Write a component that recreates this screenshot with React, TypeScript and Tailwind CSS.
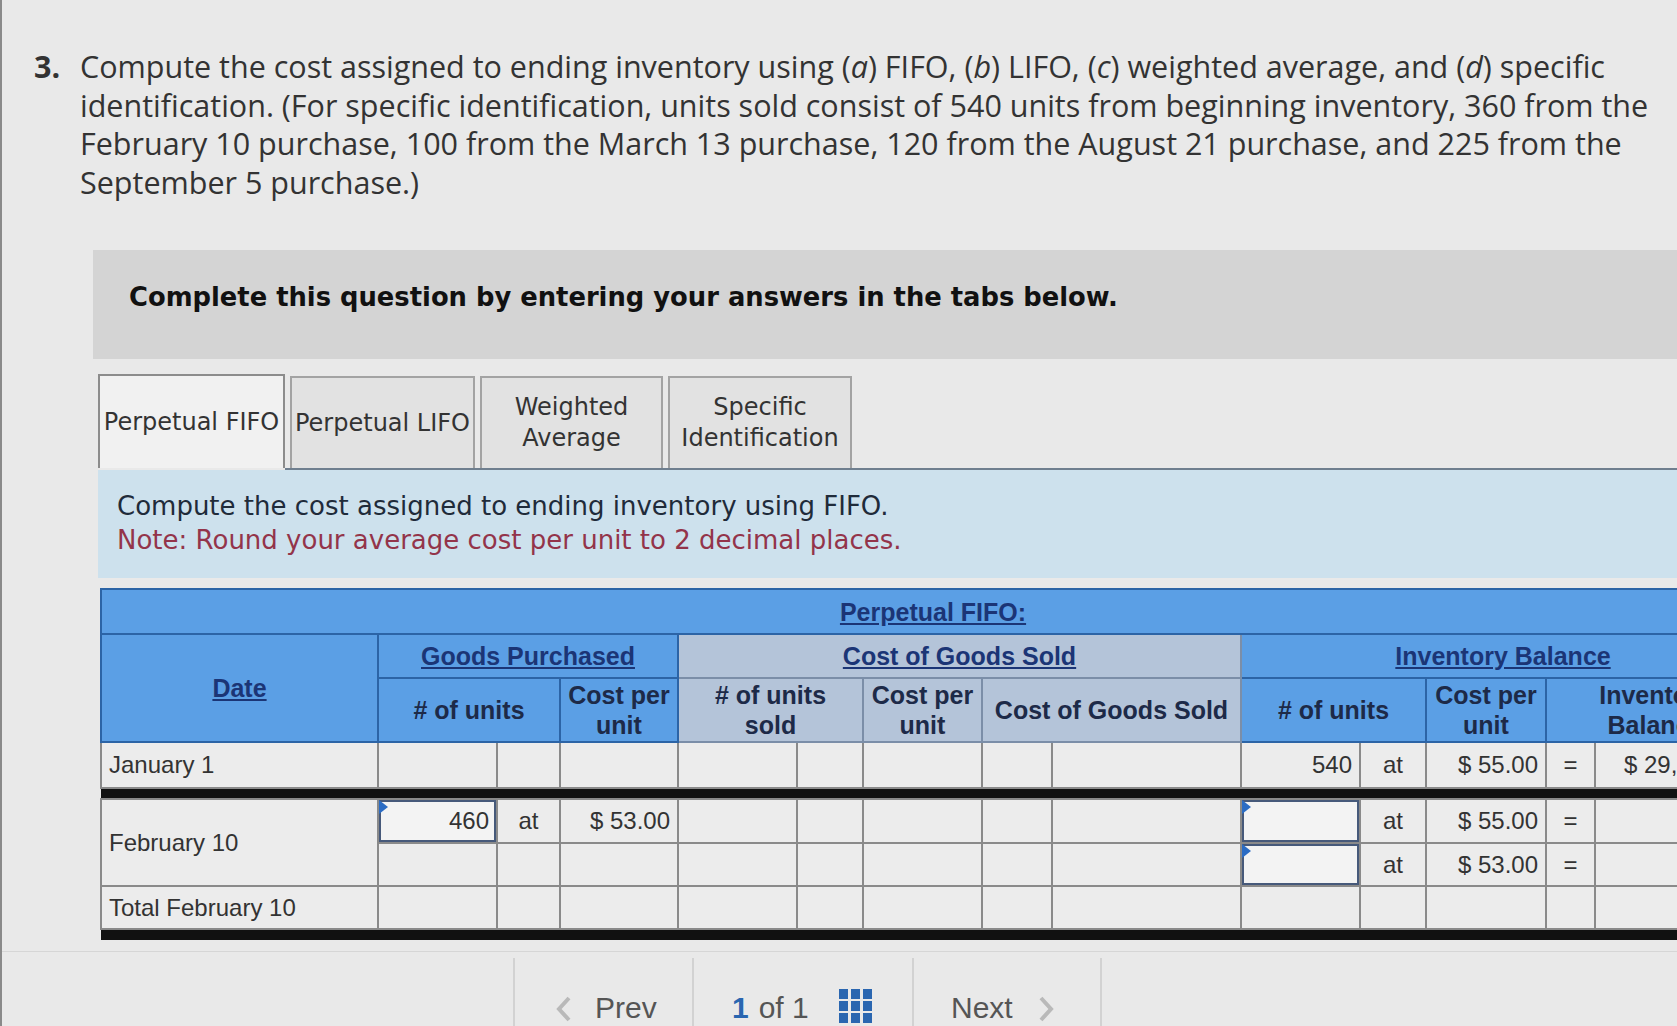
import React from 'react';

const colWidths = [277, 119, 63, 118, 119, 66, 119, 70, 189, 119, 66, 120, 49, 170];

const blueHead = 'bg-[#5b9fe5] border-2 border-[#2c64a6] text-center align-middle';
const greyHead = 'bg-[#b4c4d9] border-2 border-[#7b8ea8] text-center align-middle';
const cell = 'border-2 border-[#8a8a8a] bg-[#ececec] text-[#333] align-middle px-[7px]';
const inputCell = 'border-2 border-[#8a8a8a] bg-[#ececec] text-[#333] align-middle p-0';

const Flag = () => (
  <span className="absolute left-[-2px] top-[-2px] h-0 w-0 border-y-[7px] border-l-[9px] border-y-transparent border-l-[#2b6cc4]" />
);

const InputBox: React.FC<{ value?: string }> = ({ value }) => (
  <div className="relative flex h-full w-full items-center justify-end border-2 border-[#46597a] bg-[#f3f3f3] px-[5px]">
    <Flag />
    {value}
  </div>
);

const Empty = ({ n }: { n: number }) => (
  <>
    {Array.from({ length: n }).map((_, i) => (
      <td key={i} className={cell} />
    ))}
  </>
);

const BlackBar = () => (
  <tr>
    <td colSpan={14} className="h-[11px] bg-[#111] p-0" />
  </tr>
);

export default function App() {
  return (
    <div className="relative h-[1026px] w-[1677px] overflow-hidden border-l-2 border-[#8a8a8a] bg-[#e9e9e9] font-['Liberation_Sans',Arial,sans-serif]">
      {/* question */}
      <div className="flex pl-[32px] pt-[47px] font-['Open_Sans','Lato',sans-serif] text-[30.5px] leading-[38.5px] text-[#333]">
        <div className="w-[46px] font-bold">3.</div>
        <div className="whitespace-nowrap">
          <div>
            Compute the cost assigned to ending inventory using (<i>a</i>) FIFO, (<i>b</i>) LIFO, (<i>c</i>) weighted
            average, and (<i>d</i>) specific
          </div>
          <div>
            identification. (For specific identification, units sold consist of 540 units from beginning inventory, 360
            from the
          </div>
          <div>
            February 10 purchase, 100 from the March 13 purchase, 120 from the August 21 purchase, and 225 from the
          </div>
          <div>September 5 purchase.)</div>
        </div>
      </div>

      {/* instructions banner */}
      <div className="ml-[91px] mt-[49px] h-[109px] bg-[#d4d4d4] pl-[36px] pt-[30px] font-['DejaVu_Sans',Verdana,sans-serif] text-[25.8px] font-bold leading-[34px] text-[#111]">
        Complete this question by entering your answers in the tabs below.
      </div>

      {/* tabs */}
      <div className="ml-[96px] mt-[15px] flex items-end gap-[5px] font-['DejaVu_Sans',Verdana,sans-serif] text-[24px] leading-[31px] text-[#333]">
        <div className="flex h-[94px] w-[187px] items-center justify-center border-2 border-b-0 border-[#8c8c8c] bg-[#f1f1f1] whitespace-nowrap">
          Perpetual FIFO
        </div>
        <div className="flex h-[92px] w-[185px] items-center justify-center border-2 border-b-0 border-[#a3a3a3] bg-[#e2e2e2] whitespace-nowrap">
          Perpetual LIFO
        </div>
        <div className="flex h-[92px] w-[183px] items-center justify-center border-2 border-b-0 border-[#a3a3a3] bg-[#e2e2e2] text-center">
          Weighted
          <br />
          Average
        </div>
        <div className="flex h-[92px] w-[184px] items-center justify-center border-2 border-b-0 border-[#a3a3a3] bg-[#e2e2e2] text-center">
          Specific
          <br />
          Identification
        </div>
      </div>
      <div className="ml-[283px] h-[2px] bg-[#6f7f8f]" />

      {/* blue prompt */}
      <div className="ml-[96px] h-[108px] bg-[#cde1ed] pl-[19px] pt-[19px] font-['DejaVu_Sans',Verdana,sans-serif] text-[26px] leading-[34px]">
        <div className="text-[#1f2b3a]">Compute the cost assigned to ending inventory using FIFO.</div>
        <div className="text-[#93344a]">Note: Round your average cost per unit to 2 decimal places.</div>
      </div>

      {/* table */}
      <table className="ml-[98px] mt-[10px] w-[1664px] min-w-[1664px] table-fixed border-collapse text-[24px] leading-[30px]">
        <colgroup>
          {colWidths.map((w, i) => (
            <col key={i} style={{ width: w }} />
          ))}
        </colgroup>
        <thead className="font-bold text-[25px] text-[#1d2a48]">
          <tr className="h-[45px]">
            <td colSpan={14} className={blueHead}>
              <span className="text-[#1b3576] underline">Perpetual FIFO:</span>
            </td>
          </tr>
          <tr className="h-[44px]">
            <td rowSpan={2} className={blueHead}>
              <span className="text-[#1b3576] underline">Date</span>
            </td>
            <td colSpan={3} className={blueHead}>
              <span className="text-[#1b3576] underline">Goods Purchased</span>
            </td>
            <td colSpan={5} className={greyHead}>
              <span className="text-[#1b3576] underline">Cost of Goods Sold</span>
            </td>
            <td colSpan={5} className={blueHead}>
              <span className="text-[#1b3576] underline">Inventory Balance</span>
            </td>
          </tr>
          <tr className="h-[64px]">
            <td colSpan={2} className={blueHead}># of units</td>
            <td className={blueHead}>
              Cost per
              <br />
              unit
            </td>
            <td colSpan={2} className={greyHead}>
              # of units
              <br />
              sold
            </td>
            <td className={greyHead}>
              Cost per
              <br />
              unit
            </td>
            <td colSpan={2} className={greyHead}>
              Cost of Goods Sold
            </td>
            <td colSpan={2} className={blueHead}># of units</td>
            <td className={blueHead}>
              Cost per
              <br />
              unit
            </td>
            <td colSpan={2} className={blueHead}>
              Inventory
              <br />
              Balance
            </td>
          </tr>
        </thead>
        <tbody>
          <tr className="h-[46px]">
            <td className={cell}>January 1</td>
            <Empty n={8} />
            <td className={`${cell} text-right`}>540</td>
            <td className={`${cell} text-center`}>at</td>
            <td className={`${cell} text-right`}>$ 55.00</td>
            <td className={`${cell} text-center`}>=</td>
            <td className={`${cell} whitespace-nowrap pl-[28px]`}>$ 29,700</td>
          </tr>
          <BlackBar />
          <tr className="h-[44px]">
            <td rowSpan={2} className={cell}>
              February 10
            </td>
            <td className={`${inputCell} h-[44px]`}>
              <InputBox value="460" />
            </td>
            <td className={`${cell} text-center`}>at</td>
            <td className={`${cell} text-right`}>$ 53.00</td>
            <Empty n={5} />
            <td className={`${inputCell} h-[44px]`}>
              <InputBox />
            </td>
            <td className={`${cell} text-center`}>at</td>
            <td className={`${cell} text-right`}>$ 55.00</td>
            <td className={`${cell} text-center`}>=</td>
            <td className={cell} />
          </tr>
          <tr className="h-[43px]">
            <Empty n={8} />
            <td className={`${inputCell} h-[43px]`}>
              <InputBox />
            </td>
            <td className={`${cell} text-center`}>at</td>
            <td className={`${cell} text-right`}>$ 53.00</td>
            <td className={`${cell} text-center`}>=</td>
            <td className={cell} />
          </tr>
          <tr className="h-[43px]">
            <td className={`${cell} whitespace-nowrap`}>Total February 10</td>
            <Empty n={13} />
          </tr>
          <BlackBar />
        </tbody>
      </table>

      {/* pager */}
      <div className="mt-[11px] h-px bg-[#d6d6d6]" />
      <div className="ml-[511px] mt-[6px] flex h-[90px] text-[30px] leading-[34px] text-[#555]">
        <div className="flex w-[181px] items-start border-x-2 border-[#d2d2d2] pl-[40px] pt-[33px]">
          <svg width="18" height="30" viewBox="0 0 18 30" className="mr-[22px] mt-[3px]">
            <polyline points="14,4 4,15 14,26" fill="none" stroke="#b9b9b9" strokeWidth="4" />
          </svg>
          Prev
        </div>
        <div className="flex w-[218px] items-start pl-[38px] pt-[33px]">
          <span className="font-bold text-[#2a66b0]">1</span>
          <span className="ml-[10px]">of 1</span>
          <div className="ml-[30px] mt-[-2px] grid grid-cols-3 gap-x-[3px] gap-y-[2px]">
            {Array.from({ length: 9 }).map((_, i) => (
              <span key={i} className="h-[10px] w-[9px] bg-[#2a66b0]" />
            ))}
          </div>
        </div>
        <div className="flex w-[190px] items-start border-x-2 border-[#d2d2d2] pl-[37px] pt-[33px]">
          Next
          <svg width="18" height="30" viewBox="0 0 18 30" className="ml-[24px] mt-[3px]">
            <polyline points="4,4 14,15 4,26" fill="none" stroke="#b9b9b9" strokeWidth="4" />
          </svg>
        </div>
      </div>
    </div>
  );
}
